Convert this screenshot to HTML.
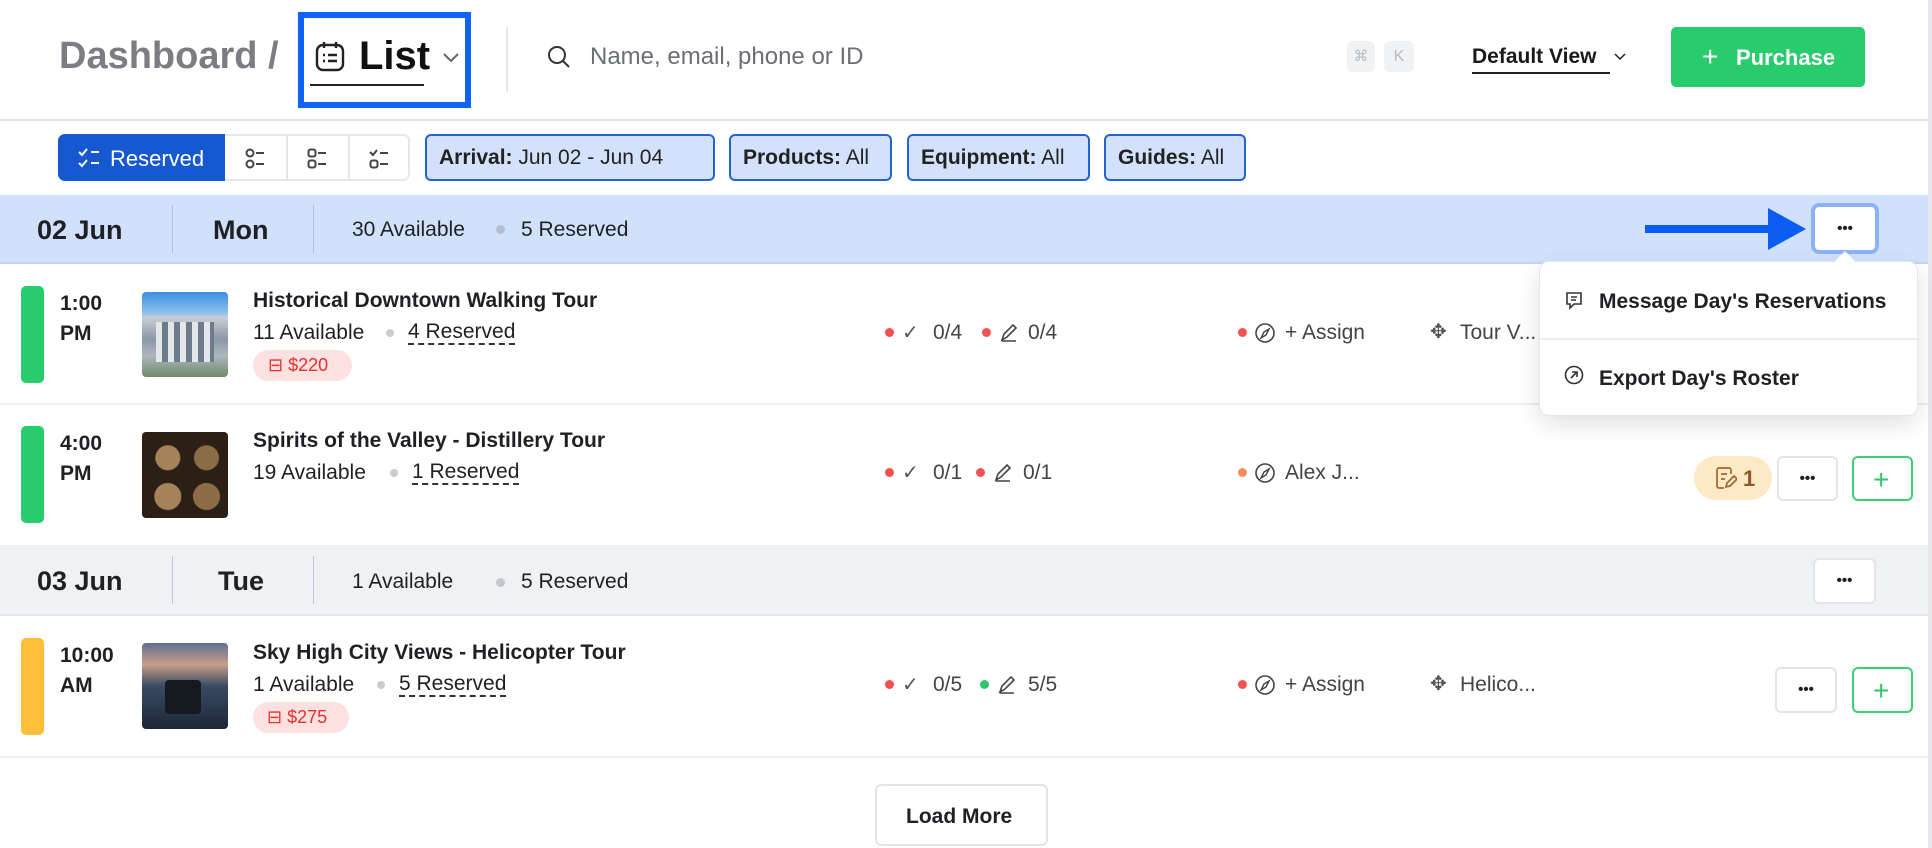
<!DOCTYPE html>
<html><head><meta charset="utf-8"><style>
*{box-sizing:border-box;margin:0;padding:0}
body{width:1932px;height:848px;overflow:hidden;background:#fff;font-family:"Liberation Sans",Arial,sans-serif;color:#1f2023;position:relative}
.a{position:absolute;white-space:nowrap}
.b{font-weight:bold}
svg{display:block}
.chip{position:absolute;top:134px;height:47px;background:#d3e1fb;border:2px solid #2463d4;border-radius:6px;font-size:21px;line-height:43px;padding-left:12px;color:#222}
.dot{position:absolute;width:9px;height:9px;border-radius:50%}
.btn{position:absolute;background:#fff;border:2px solid #e3e4e7;border-radius:6px}
.dots{position:absolute;left:50%;top:50%;transform:translate(-50%,-50%);font-size:15px;font-weight:bold;letter-spacing:0px;line-height:10px}
</style></head><body>
<!-- header -->
<div class="a b" style="left:59px;top:35px;font-size:38px;color:#7b7d83">Dashboard /</div>
<div class="a" style="left:298px;top:12px;width:173px;height:96px;border:6px solid #0f63f5"></div>
<svg class="a" style="left:315px;top:40px" width="30" height="32" viewBox="0 0 30 32"><rect x="2" y="5" width="26" height="25" rx="6" fill="none" stroke="#222" stroke-width="2.4"/><path d="M9 2v6M21 2v6M8 15h2M13 15h9M8 21h2M13 21h9" stroke="#222" stroke-width="2.4"/></svg>
<div class="a b" style="left:359px;top:34px;font-size:40px;color:#111">List</div>
<div class="a" style="left:310px;top:84px;width:114px;height:2px;background:#222"></div>
<svg class="a" style="left:442px;top:52px" width="18" height="12"><path d="M2 2l7 7 7-7" fill="none" stroke="#666" stroke-width="2"/></svg>
<div class="a" style="left:506px;top:27px;width:2px;height:65px;background:#e5e6e8"></div>
<svg class="a" style="left:547px;top:45px" width="24" height="24"><circle cx="10" cy="10" r="8" fill="none" stroke="#333" stroke-width="2"/><path d="M16 16l6 6" stroke="#333" stroke-width="2"/></svg>
<div class="a" style="left:590px;top:43px;font-size:24px;color:#6b6e75">Name, email, phone or ID</div>
<div class="a" style="left:1347px;top:41px;width:28px;height:31px;background:#f1f2f4;border-radius:6px;color:#b9bbc0;font-size:15px;text-align:center;line-height:31px">⌘</div>
<div class="a" style="left:1384px;top:41px;width:30px;height:31px;background:#f1f2f4;border-radius:6px;color:#b9bbc0;font-size:16px;text-align:center;line-height:31px">K</div>
<div class="a b" style="left:1472px;top:45px;font-size:21px;color:#1a1a1a">Default View</div>
<div class="a" style="left:1472px;top:72px;width:138px;height:2px;background:#222"></div>
<svg class="a" style="left:1614px;top:53px" width="12" height="8"><path d="M1 1l5 5 5-5" fill="none" stroke="#222" stroke-width="1.5"/></svg>
<div class="a" style="left:1671px;top:27px;width:194px;height:60px;background:#29cc6c;border-radius:5px"></div>
<div class="a" style="left:1702px;top:42px;font-size:28px;color:#fff;line-height:30px">+</div>
<div class="a b" style="left:1736px;top:45px;font-size:22px;color:#fff">Purchase</div>
<div class="a" style="left:0;top:119px;width:1932px;height:2px;background:#e4e5e7"></div>
<div class="a" style="left:1928px;top:0;width:4px;height:848px;background:#e8e8ea"></div>
<!-- filters -->
<div class="a" style="left:58px;top:134px;width:352px;height:47px;border:2px solid #e6e7ea;border-radius:7px;background:#fff"></div>
<div class="a" style="left:58px;top:134px;width:167px;height:47px;background:#1558d0;border-radius:7px 0 0 7px"></div>
<svg class="a" style="left:78px;top:147px" width="22" height="22" viewBox="0 0 22 22"><path d="M1 5l3 3 5-6M1 16l3 3 5-6M13 5h8M13 16h8" fill="none" stroke="#fff" stroke-width="2"/></svg>
<div class="a" style="left:110px;top:146px;font-size:22px;color:#fff">Reserved</div>
<div class="a" style="left:286px;top:136px;width:2px;height:43px;background:#e6e7ea"></div>
<div class="a" style="left:348px;top:136px;width:2px;height:43px;background:#e6e7ea"></div>
<svg class="a" style="left:245px;top:148px" width="22" height="22"><circle cx="5" cy="5" r="3.5" fill="none" stroke="#444" stroke-width="2"/><circle cx="5" cy="16" r="3.5" fill="none" stroke="#444" stroke-width="2"/><path d="M11 5h8M11 16h8" stroke="#444" stroke-width="2"/></svg>
<svg class="a" style="left:307px;top:148px" width="22" height="22"><rect x="1.5" y="1.5" width="7" height="7" rx="2" fill="none" stroke="#444" stroke-width="2"/><rect x="1.5" y="12.5" width="7" height="7" rx="2" fill="none" stroke="#444" stroke-width="2"/><path d="M11 5h8M11 16h8" stroke="#444" stroke-width="2"/></svg>
<svg class="a" style="left:369px;top:148px" width="22" height="22"><path d="M1 4l3 3 4-5" fill="none" stroke="#444" stroke-width="2"/><rect x="1.5" y="12.5" width="7" height="7" rx="2" fill="none" stroke="#444" stroke-width="2"/><path d="M11 5h8M11 16h8" stroke="#444" stroke-width="2"/></svg>
<div class="chip" style="left:425px;width:290px"><b>Arrival:</b> Jun 02 - Jun 04</div>
<div class="chip" style="left:729px;width:163px"><b>Products:</b> All</div>
<div class="chip" style="left:907px;width:183px"><b>Equipment:</b> All</div>
<div class="chip" style="left:1104px;width:142px"><b>Guides:</b> All</div>
<!-- day 1 -->
<div class="a" style="left:0;top:195px;width:1928px;height:69px;background:#d1e1fc;border-bottom:2px solid #c5d6f5"></div>
<div class="a b" style="left:37px;top:215px;font-size:27px">02 Jun</div>
<div class="a" style="left:172px;top:205px;width:1px;height:48px;background:#a9c0e8"></div>
<div class="a b" style="left:213px;top:215px;font-size:27px">Mon</div>
<div class="a" style="left:313px;top:205px;width:1px;height:48px;background:#a9c0e8"></div>
<div class="a" style="left:352px;top:218px;font-size:21px">30 Available</div>
<div class="dot" style="left:496px;top:225px;background:#b3bdd0"></div>
<div class="a" style="left:521px;top:218px;font-size:21px">5 Reserved</div>
<div class="a" style="left:1645px;top:225px;width:132px;height:8px;background:#0d5cf2"></div>
<svg class="a" style="left:1768px;top:208px" width="40" height="42"><path d="M0 0L38 21 0 42z" fill="#0d5cf2"/></svg>
<div class="btn" style="left:1811px;top:203px;width:68px;height:51px;border:4px solid #8db2fa;border-radius:8px"><div class="dots">•••</div></div>
<!-- row 1 -->
<div class="a" style="left:21px;top:286px;width:23px;height:97px;background:#29cc6c;border-radius:5px"></div>
<div class="a b" style="left:60px;top:289px;font-size:21px;line-height:30px">1:00<br>PM</div>
<div class="a" style="left:142px;top:292px;width:86px;height:85px;border-radius:4px;background:linear-gradient(180deg,#3a8fe0 0%,#8fc0ee 25%,#c9cfd6 30%,#8c98a6 55%,#aeb5bd 75%,#6f8a6a 100%)"></div>
<div class="a" style="left:156px;top:322px;width:58px;height:40px;background:repeating-linear-gradient(90deg,#e4e7ea 0 6px,#6d7c8c 6px 12px)"></div>
<div class="a b" style="left:253px;top:289px;font-size:21px">Historical Downtown Walking Tour</div>
<div class="a" style="left:253px;top:321px;font-size:21px">11 Available</div>
<div class="dot" style="left:386px;top:329px;background:#ccc;width:8px;height:8px"></div>
<div class="a" style="left:408px;top:321px;font-size:21px;border-bottom:2px dashed #333;line-height:22px">4 Reserved</div>
<div class="a" style="left:253px;top:350px;width:99px;height:31px;background:#fde1e1;border-radius:16px"></div>
<div class="a" style="left:268px;top:355px;font-size:18px;color:#e5302f">⊟ $220</div>
<!-- status row1 -->
<div class="dot" style="left:885px;top:328px;background:#f35050"></div>
<div class="a" style="left:902px;top:320px;font-size:20px;color:#555">✓</div>
<div class="a" style="left:933px;top:321px;font-size:21px;color:#444">0/4</div>
<div class="dot" style="left:982px;top:328px;background:#f35050"></div>
<svg class="a" style="left:1000px;top:323px" width="18" height="20"><path d="M2 17l2-6 9-9 3 3-9 9z M2 18h14" fill="none" stroke="#444" stroke-width="1.6"/></svg>
<div class="a" style="left:1028px;top:321px;font-size:21px;color:#444">0/4</div>
<div class="dot" style="left:1238px;top:328px;background:#f35050"></div>
<svg class="a" style="left:1254px;top:322px" width="22" height="22"><circle cx="11" cy="11" r="9" fill="none" stroke="#444" stroke-width="1.6"/><path d="M15 7l-3 6-5 3 3-6z" fill="none" stroke="#444" stroke-width="1.4"/></svg>
<div class="a" style="left:1285px;top:321px;font-size:21px;color:#444">+ Assign</div>
<div class="a" style="left:1430px;top:319px;font-size:20px;color:#555">✥</div>
<div class="a" style="left:1460px;top:321px;font-size:21px;color:#444">Tour V...</div>
<div class="a" style="left:0;top:403px;width:1928px;height:2px;background:#eeeff1"></div>
<!-- row 2 -->
<div class="a" style="left:21px;top:426px;width:23px;height:97px;background:#29cc6c;border-radius:5px"></div>
<div class="a b" style="left:60px;top:429px;font-size:21px;line-height:30px">4:00<br>PM</div>
<div class="a" style="left:142px;top:432px;width:86px;height:86px;border-radius:4px;background:radial-gradient(circle at 30% 30%,#a5825a 0 12px,transparent 13px),radial-gradient(circle at 75% 30%,#8e6c48 0 12px,transparent 13px),radial-gradient(circle at 30% 75%,#a5825a 0 13px,transparent 14px),radial-gradient(circle at 75% 75%,#8e6c48 0 13px,transparent 14px),#2b1f16"></div>
<div class="a b" style="left:253px;top:429px;font-size:21px">Spirits of the Valley - Distillery Tour</div>
<div class="a" style="left:253px;top:461px;font-size:21px">19 Available</div>
<div class="dot" style="left:390px;top:469px;background:#ccc;width:8px;height:8px"></div>
<div class="a" style="left:412px;top:461px;font-size:21px;border-bottom:2px dashed #333;line-height:22px">1 Reserved</div>
<div class="dot" style="left:885px;top:468px;background:#f35050"></div>
<div class="a" style="left:902px;top:460px;font-size:20px;color:#555">✓</div>
<div class="a" style="left:933px;top:461px;font-size:21px;color:#444">0/1</div>
<div class="dot" style="left:976px;top:468px;background:#f35050"></div>
<svg class="a" style="left:994px;top:463px" width="18" height="20"><path d="M2 17l2-6 9-9 3 3-9 9z M2 18h14" fill="none" stroke="#444" stroke-width="1.6"/></svg>
<div class="a" style="left:1023px;top:461px;font-size:21px;color:#444">0/1</div>
<div class="dot" style="left:1238px;top:468px;background:#f58a5e"></div>
<svg class="a" style="left:1254px;top:462px" width="22" height="22"><circle cx="11" cy="11" r="9" fill="none" stroke="#444" stroke-width="1.6"/><path d="M15 7l-3 6-5 3 3-6z" fill="none" stroke="#444" stroke-width="1.4"/></svg>
<div class="a" style="left:1285px;top:461px;font-size:21px;color:#444">Alex J...</div>
<div class="a" style="left:1694px;top:456px;width:78px;height:44px;background:#fde9c5;border-radius:22px"></div>
<svg class="a" style="left:1715px;top:466px" width="22" height="24"><path d="M16 8V4a2 2 0 0 0-2-2H4a2 2 0 0 0-2 2v16a2 2 0 0 0 2 2h5M6 8h6M6 13h4M11 21l1-4 7-7 3 3-7 7z" fill="none" stroke="#a0652a" stroke-width="1.7"/></svg>
<div class="a b" style="left:1743px;top:466px;font-size:22px;color:#8a5a28">1</div>
<div class="btn" style="left:1777px;top:456px;width:61px;height:45px"><div class="dots">•••</div></div>
<div class="btn" style="left:1852px;top:456px;width:61px;height:45px;border-color:#3ccf76"><div class="a" style="left:19px;top:6px;font-size:28px;color:#2fc66a">+</div></div>
<!-- day 2 -->
<div class="a" style="left:0;top:545px;width:1928px;height:71px;background:#f0f1f3;border-bottom:2px solid #dde5f2"></div>
<div class="a b" style="left:37px;top:566px;font-size:27px">03 Jun</div>
<div class="a" style="left:172px;top:556px;width:1px;height:48px;background:#b9c9e6"></div>
<div class="a b" style="left:218px;top:566px;font-size:27px">Tue</div>
<div class="a" style="left:313px;top:556px;width:1px;height:48px;background:#b9c9e6"></div>
<div class="a" style="left:352px;top:570px;font-size:21px">1 Available</div>
<div class="dot" style="left:496px;top:578px;background:#c3c6cc"></div>
<div class="a" style="left:521px;top:570px;font-size:21px">5 Reserved</div>
<div class="btn" style="left:1813px;top:558px;width:63px;height:46px"><div class="dots">•••</div></div>
<!-- row 3 -->
<div class="a" style="left:21px;top:638px;width:23px;height:97px;background:#fdbf3a;border-radius:5px"></div>
<div class="a b" style="left:60px;top:641px;font-size:21px;line-height:30px">10:00<br>AM</div>
<div class="a" style="left:142px;top:643px;width:86px;height:86px;border-radius:4px;background:linear-gradient(180deg,#5e6f8c 0%,#c79e8a 25%,#3a4a63 50%,#1d2738 100%)"></div>
<div class="a" style="left:165px;top:680px;width:36px;height:34px;background:#141a20;border-radius:4px"></div>
<div class="a b" style="left:253px;top:641px;font-size:21px">Sky High City Views - Helicopter Tour</div>
<div class="a" style="left:253px;top:673px;font-size:21px">1 Available</div>
<div class="dot" style="left:377px;top:681px;background:#ccc;width:8px;height:8px"></div>
<div class="a" style="left:399px;top:673px;font-size:21px;border-bottom:2px dashed #333;line-height:22px">5 Reserved</div>
<div class="a" style="left:253px;top:702px;width:96px;height:31px;background:#fde1e1;border-radius:16px"></div>
<div class="a" style="left:267px;top:707px;font-size:18px;color:#e5302f">⊟ $275</div>
<div class="dot" style="left:885px;top:680px;background:#f35050"></div>
<div class="a" style="left:902px;top:672px;font-size:20px;color:#555">✓</div>
<div class="a" style="left:933px;top:673px;font-size:21px;color:#444">0/5</div>
<div class="dot" style="left:980px;top:680px;background:#2fc66a"></div>
<svg class="a" style="left:998px;top:675px" width="18" height="20"><path d="M2 17l2-6 9-9 3 3-9 9z M2 18h14" fill="none" stroke="#444" stroke-width="1.6"/></svg>
<div class="a" style="left:1028px;top:673px;font-size:21px;color:#444">5/5</div>
<div class="dot" style="left:1238px;top:680px;background:#f35050"></div>
<svg class="a" style="left:1254px;top:674px" width="22" height="22"><circle cx="11" cy="11" r="9" fill="none" stroke="#444" stroke-width="1.6"/><path d="M15 7l-3 6-5 3 3-6z" fill="none" stroke="#444" stroke-width="1.4"/></svg>
<div class="a" style="left:1285px;top:673px;font-size:21px;color:#444">+ Assign</div>
<div class="a" style="left:1430px;top:671px;font-size:20px;color:#555">✥</div>
<div class="a" style="left:1460px;top:673px;font-size:21px;color:#444">Helico...</div>
<div class="btn" style="left:1775px;top:667px;width:62px;height:46px"><div class="dots">•••</div></div>
<div class="btn" style="left:1852px;top:667px;width:61px;height:46px;border-color:#3ccf76"><div class="a" style="left:19px;top:6px;font-size:28px;color:#2fc66a">+</div></div>
<div class="a" style="left:0;top:756px;width:1928px;height:2px;background:#eeeff1"></div>
<div class="btn" style="left:875px;top:784px;width:173px;height:62px"><div class="a b" style="left:29px;top:19px;font-size:21px">Load More</div></div>
<!-- dropdown -->
<div class="a" style="left:1539px;top:261px;width:379px;height:155px;background:#fff;border:1px solid #e6e7ea;border-radius:10px;box-shadow:0 8px 24px rgba(0,0,0,.12)"></div>
<div class="a" style="left:1838px;top:254px;width:14px;height:14px;background:#fff;transform:rotate(45deg)"></div>
<svg class="a" style="left:1565px;top:291px" width="18" height="20"><path d="M2 2h14v11h-7l-4 4v-4H2z M6 6h6M6 9h5" fill="none" stroke="#333" stroke-width="1.6"/></svg>
<div class="a b" style="left:1599px;top:290px;font-size:21px">Message Day's Reservations</div>
<div class="a" style="left:1539px;top:338px;width:379px;height:2px;background:#ececee"></div>
<svg class="a" style="left:1564px;top:365px" width="20" height="20"><circle cx="10" cy="10" r="8.5" fill="none" stroke="#333" stroke-width="1.6"/><path d="M7 13l6-6M8 7h5v5" fill="none" stroke="#333" stroke-width="1.6"/></svg>
<div class="a b" style="left:1599px;top:367px;font-size:21px">Export Day's Roster</div>
</body></html>
